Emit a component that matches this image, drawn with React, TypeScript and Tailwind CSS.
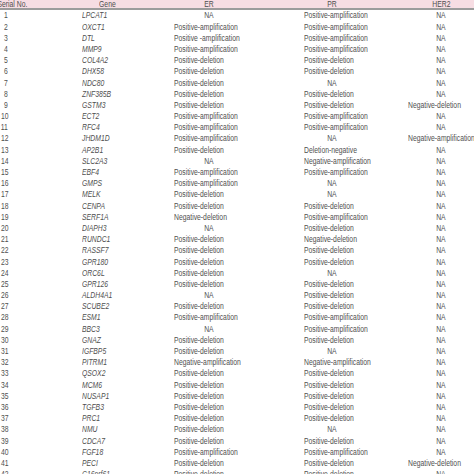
import React from "react";

type Row = [number, string, string, string, string];

const PA = "Positive-amplification";
const PD = "Positive-deletion";
const NA = "NA";

const rows: Row[] = [
  [1, "LPCAT1", NA, PA, NA],
  [2, "OXCT1", PA, PA, NA],
  [3, "DTL", "Positive -amplification", PA, NA],
  [4, "MMP9", PA, PA, NA],
  [5, "COL4A2", PD, PD, NA],
  [6, "DHX58", PD, PD, NA],
  [7, "NDC80", PD, NA, NA],
  [8, "ZNF385B", PD, PD, NA],
  [9, "GSTM3", PD, PD, "Negative-deletion"],
  [10, "ECT2", PA, PA, NA],
  [11, "RFC4", PA, PA, NA],
  [12, "JHDM1D", PA, NA, "Negative-amplification"],
  [13, "AP2B1", PD, "Deletion-negative", NA],
  [14, "SLC2A3", NA, "Negative-amplification", NA],
  [15, "EBF4", PA, PA, NA],
  [16, "GMPS", PA, NA, NA],
  [17, "MELK", PD, NA, NA],
  [18, "CENPA", PD, PD, NA],
  [19, "SERF1A", "Negative-deletion", PA, NA],
  [20, "DIAPH3", NA, PD, NA],
  [21, "RUNDC1", PD, "Negative-deletion", NA],
  [22, "RASSF7", PD, PD, NA],
  [23, "GPR180", PD, PD, NA],
  [24, "ORC6L", PD, NA, NA],
  [25, "GPR126", PD, PD, NA],
  [26, "ALDH4A1", NA, PD, NA],
  [27, "SCUBE2", PD, PD, NA],
  [28, "ESM1", PA, PA, NA],
  [29, "BBC3", NA, PA, NA],
  [30, "GNAZ", PD, PD, NA],
  [31, "IGFBP5", PD, NA, NA],
  [32, "PITRM1", "Negative-amplification", "Negative-amplification", NA],
  [33, "QSOX2", PD, PD, NA],
  [34, "MCM6", PD, PD, NA],
  [35, "NUSAP1", PD, PD, NA],
  [36, "TGFB3", PD, PD, NA],
  [37, "PRC1", PD, PD, NA],
  [38, "NMU", PD, NA, NA],
  [39, "CDCA7", PD, PD, NA],
  [40, "FGF18", PA, PA, NA],
  [41, "PECI", PD, PD, "Negative-deletion"],
  [42, "C16orf61", PD, PD, NA],
];

function Val({ v, naWidth }: { v: string; naWidth: string }) {
  if (v === NA) {
    return (
      <div className={`${naWidth} flex justify-center`}>
        <span className="inline-block origin-center scale-x-80 whitespace-nowrap">NA</span>
      </div>
    );
  }
  return <span className="inline-block origin-left scale-x-80 whitespace-nowrap">{v}</span>;
}

export default function App() {
  return (
    <div
      className="w-[474px] h-[474px] overflow-hidden bg-white text-[#4f4f4f] text-[8.5px]"
      style={{ fontFamily: '"Liberation Sans", Arial, sans-serif' }}
    >
      <div className="h-[8px] leading-[8px] bg-[#f7dde3] flex">
        <div className="w-[27px] shrink-0 flex justify-end">
          <span className="inline-block origin-right scale-x-80 whitespace-nowrap">Serial No.</span>
        </div>
        <div className="w-[147px] shrink-0 flex justify-center pl-[14px]">
          <span className="inline-block scale-x-80 whitespace-nowrap">Gene</span>
        </div>
        <div className="w-[70px] shrink-0 flex justify-center">
          <span className="inline-block scale-x-80 whitespace-nowrap">ER</span>
        </div>
        <div className="w-[60px] shrink-0" />
        <div className="w-[56px] shrink-0 flex justify-center">
          <span className="inline-block scale-x-80 whitespace-nowrap">PR</span>
        </div>
        <div className="w-[48px] shrink-0" />
        <div className="w-[66px] shrink-0 flex justify-center">
          <span className="inline-block scale-x-80 whitespace-nowrap">HER2</span>
        </div>
      </div>
      <div className="h-[2px] bg-[#9c9c9c]" />
      <div className="pt-[0.4px]">
        {rows.map(([n, gene, er, pr, her2]) => (
          <div key={n} className="flex h-[11.19px] leading-[11.19px]">
            <div className="w-[8px] shrink-0 flex justify-end">
              <span className="inline-block origin-right scale-x-80 whitespace-nowrap">{n}</span>
            </div>
            <div className="w-[166px] shrink-0 pl-[74px]">
              <span className="inline-block origin-left scale-x-80 whitespace-nowrap italic">{gene}</span>
            </div>
            <div className="w-[130px] shrink-0">
              <Val v={er} naWidth="w-[70px]" />
            </div>
            <div className="w-[104px] shrink-0">
              <Val v={pr} naWidth="w-[56px]" />
            </div>
            <div className="w-[66px] shrink-0">
              <Val v={her2} naWidth="w-[66px]" />
            </div>
          </div>
        ))}
      </div>
    </div>
  );
}
